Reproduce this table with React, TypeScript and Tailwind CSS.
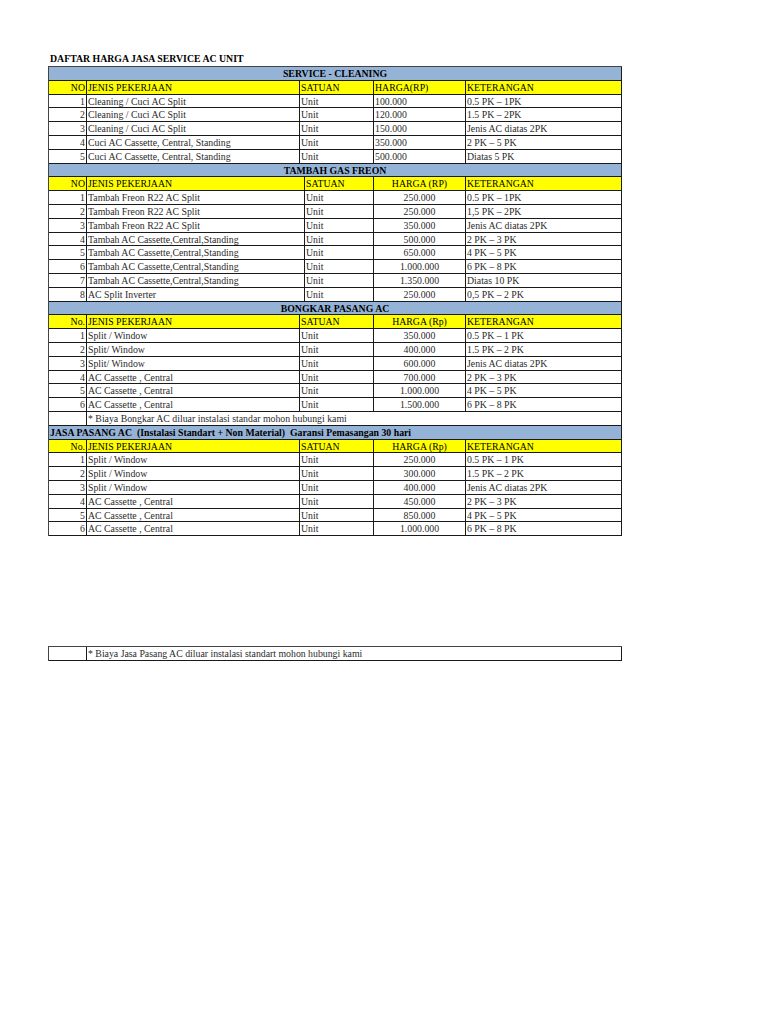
type Row = [string, string, string, string, string];

const COLS_A = "grid-cols-[38px_213px_74px_92px_156px]";
const COLS_B = "grid-cols-[38px_218px_69px_92px_156px]";

const cell = "h-[13.8px] border-r border-b border-[#1a1a1a] px-[1px] leading-[13px] whitespace-nowrap overflow-hidden";

function SectionTitle({ text, left }: { text: string; left?: boolean }) {
  return (
    <div
      className={`h-[13.8px] border-b border-r border-[#1a1a1a] bg-[#95b3d7] px-[1px] font-bold leading-[13px] text-black whitespace-pre ${
        left ? "text-left" : "text-center"
      }`}
    >
      {text}
    </div>
  );
}

function HeaderRow({ cols, no, harga, hargaCenter }: { cols: string; no: string; harga: string; hargaCenter?: boolean }) {
  return (
    <div className={`grid ${cols} bg-[#ffff00] text-black`}>
      <div className={`${cell} text-right`}>{no}</div>
      <div className={cell}>JENIS PEKERJAAN</div>
      <div className={cell}>SATUAN</div>
      <div className={`${cell} ${hargaCenter ? "text-center" : ""}`}>{harga}</div>
      <div className={cell}>KETERANGAN</div>
    </div>
  );
}

function DataRows({ cols, rows, hargaCenter }: { cols: string; rows: Row[]; hargaCenter?: boolean }) {
  return (
    <>
      {rows.map((r) => (
        <div key={r[0] + r[1]} className={`grid ${cols} bg-white text-[#2a2a2a]`}>
          <div className={`${cell} text-right`}>{r[0]}</div>
          <div className={cell}>{r[1]}</div>
          <div className={cell}>{r[2]}</div>
          <div className={`${cell} ${hargaCenter ? "text-center" : ""}`}>{r[3]}</div>
          <div className={cell}>{r[4]}</div>
        </div>
      ))}
    </>
  );
}

function NoteRow({ text }: { text: string }) {
  return (
    <div className="grid grid-cols-[38px_535px] bg-white text-[#2a2a2a]">
      <div className={cell}></div>
      <div className={cell}>{text}</div>
    </div>
  );
}

const cleaning: Row[] = [
  ["1", "Cleaning / Cuci AC Split", "Unit", "100.000", "0.5 PK – 1PK"],
  ["2", "Cleaning / Cuci AC Split", "Unit", "120.000", "1.5 PK – 2PK"],
  ["3", "Cleaning / Cuci AC Split", "Unit", "150.000", "Jenis AC diatas 2PK"],
  ["4", "Cuci AC Cassette, Central, Standing", "Unit", "350.000", "2 PK – 5 PK"],
  ["5", "Cuci AC Cassette, Central, Standing", "Unit", "500.000", "Diatas 5 PK"],
];

const freon: Row[] = [
  ["1", "Tambah Freon R22 AC Split", "Unit", "250.000", "0.5 PK – 1PK"],
  ["2", "Tambah Freon R22 AC Split", "Unit", "250.000", "1,5 PK – 2PK"],
  ["3", "Tambah Freon R22 AC Split", "Unit", "350.000", "Jenis AC diatas 2PK"],
  ["4", "Tambah AC Cassette,Central,Standing", "Unit", "500.000", "2 PK – 3 PK"],
  ["5", "Tambah AC Cassette,Central,Standing", "Unit", "650.000", "4 PK – 5 PK"],
  ["6", "Tambah AC Cassette,Central,Standing", "Unit", "1.000.000", "6 PK – 8 PK"],
  ["7", "Tambah AC Cassette,Central,Standing", "Unit", "1.350.000", "Diatas 10 PK"],
  ["8", "AC Split Inverter", "Unit", "250.000", "0,5 PK – 2 PK"],
];

const bongkar: Row[] = [
  ["1", "Split / Window", "Unit", "350.000", "0.5 PK – 1 PK"],
  ["2", "Split/ Window", "Unit", "400.000", "1.5 PK – 2 PK"],
  ["3", "Split/ Window", "Unit", "600.000", "Jenis AC diatas 2PK"],
  ["4", "AC Cassette , Central", "Unit", "700.000", "2 PK – 3 PK"],
  ["5", "AC Cassette , Central", "Unit", "1.000.000", "4 PK – 5 PK"],
  ["6", "AC Cassette , Central", "Unit", "1.500.000", "6 PK – 8 PK"],
];

const pasang: Row[] = [
  ["1", "Split / Window", "Unit", "250.000", "0.5 PK – 1 PK"],
  ["2", "Split / Window", "Unit", "300.000", "1.5 PK – 2 PK"],
  ["3", "Split / Window", "Unit", "400.000", "Jenis AC diatas 2PK"],
  ["4", "AC Cassette , Central", "Unit", "450.000", "2 PK – 3 PK"],
  ["5", "AC Cassette , Central", "Unit", "850.000", "4 PK – 5 PK"],
  ["6", "AC Cassette , Central", "Unit", "1.000.000", "6 PK – 8 PK"],
];

export default function App() {
  return (
    <div className="min-h-[1024px] w-[768px] bg-white pl-[48px] pt-[52px] text-[9.8px] font-['Liberation_Serif',serif]">
      <div className="h-[14px] pl-[2px] text-[9.8px] font-bold leading-[13px] text-black">DAFTAR HARGA JASA SERVICE AC UNIT</div>

      <div className="w-[574px] border-l border-t border-[#444]">
        <SectionTitle text="SERVICE - CLEANING" />
        <HeaderRow cols={COLS_A} no="NO" harga="HARGA(RP)" />
        <DataRows cols={COLS_A} rows={cleaning} />

        <SectionTitle text="TAMBAH GAS FREON" />
        <HeaderRow cols={COLS_B} no="NO" harga="HARGA (RP)" hargaCenter />
        <DataRows cols={COLS_B} rows={freon} hargaCenter />

        <SectionTitle text="BONGKAR PASANG AC" />
        <HeaderRow cols={COLS_A} no="No." harga="HARGA (Rp)" hargaCenter />
        <DataRows cols={COLS_A} rows={bongkar} hargaCenter />
        <NoteRow text="* Biaya Bongkar AC diluar instalasi standar mohon hubungi kami" />

        <SectionTitle text="JASA PASANG AC  (Instalasi Standart + Non Material)  Garansi Pemasangan 30 hari" left />
        <HeaderRow cols={COLS_A} no="No." harga="HARGA (Rp)" hargaCenter />
        <DataRows cols={COLS_A} rows={pasang} hargaCenter />
      </div>

      <div className="mt-[110px] w-[574px] border-l border-t border-[#444]">
        <NoteRow text="* Biaya Jasa Pasang AC diluar instalasi standart mohon hubungi kami" />
      </div>
    </div>
  );
}
